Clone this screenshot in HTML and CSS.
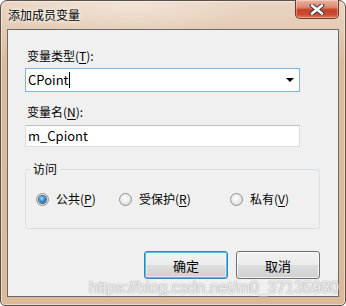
FILE: index.html
```html
<!DOCTYPE html>
<html>
<head>
<meta charset="utf-8">
<link rel="stylesheet" href="styles.css">
</head>
<body>
<div class="window">
  <div class="titlebar">
    <span class="title">添加成员变量</span>
    <div class="close">
      <svg width="16" height="11" viewBox="0 0 16 11">
        <path d="M3 1.5 L13 9.5 M13 1.5 L3 9.5" stroke="#3b3b3b" stroke-width="4.6" stroke-linecap="round"/>
        <path d="M3 1.5 L13 9.5 M13 1.5 L3 9.5" stroke="#ffffff" stroke-width="2.6" stroke-linecap="round"/>
      </svg>
    </div>
  </div>
  <div class="client">
    <div class="label">变量类型(<u>T</u>):</div>
    <div class="combo"><span class="value">CPoint</span><span class="caret"></span><span class="arrow"></span></div>
    <div class="label label2">变量名(<u>N</u>):</div>
    <div class="edit">m_Cpiont</div>
    <fieldset class="group">
      <legend>访问</legend>
      <div class="radios">
        <div class="radio"><span class="dot on"></span><span>公共(<u>P</u>)</span></div>
        <div class="radio"><span class="dot"></span><span>受保护(<u>R</u>)</span></div>
        <div class="radio"><span class="dot"></span><span>私有(<u>V</u>)</span></div>
      </div>
    </fieldset>
    <div class="buttons">
      <div class="btn default">确定</div>
      <div class="btn">取消</div>
    </div>
  </div>
  <div class="watermark">https://blog.csdn.net/m0_37135980</div>
</div>
</body>
</html>
```
FILE: styles.css
```css
html, body {
  margin: 0;
  padding: 0;
  background: #ffffff;
}
body {
  width: 346px;
  height: 306px;
  overflow: hidden;
  font-family: "Noto Sans CJK SC", "Liberation Sans", sans-serif;
  font-size: 12px;
  color: #000;
}
.window {
  position: relative;
  box-sizing: border-box;
  width: 346px;
  height: 306px;
  border: 1px solid #5b5148;
  border-radius: 7px 7px 5px 5px;
  background:
    radial-gradient(ellipse 120px 30px at 130px 6px, rgba(255,255,255,0.35), rgba(255,255,255,0) 100%),
    linear-gradient(180deg, #ead6c4 0px, #e4cbb4 28px, #dcbb9b 60px, #dcba98 100%);
  display: flex;
  flex-direction: column;
  box-shadow: inset 0 0 0 1px rgba(255,255,255,0.45);
}
.titlebar {
  height: 28px;
  display: flex;
  align-items: flex-start;
  padding-left: 7px;
}
.title {
  margin-top: 6px;
  font-size: 12px;
  line-height: 16px;
  text-shadow: 0 0 6px #fff, 0 0 3px #fff;
}
.close {
  margin-left: auto;
  margin-right: 6px;
  margin-top: -1px;
  width: 44px;
  height: 19px;
  box-sizing: border-box;
  border: 1px solid #6e3a2c;
  border-top: none;
  border-radius: 0 0 5px 5px;
  background: linear-gradient(180deg, #ebb1a1 0%, #dc8a72 40%, #c4412a 55%, #cd4a30 80%, #df7a55 100%);
  box-shadow: inset 0 0 0 1px rgba(255,255,255,0.35);
  display: flex;
  align-items: center;
  justify-content: center;
}
.close svg { display: block; }
.client {
  margin: 0 6px 0 6px;
  height: 268px;
  box-sizing: border-box;
  border: 1px solid #6a6a6a;
  background: #f0f0f0;
  padding: 18px 18px 0 17px;
  display: flex;
  flex-direction: column;
}
.label {
  padding-left: 2px;
  line-height: 16px;
  height: 16px;
}
.label u, .radio u { text-decoration: underline; text-underline-offset: 2px; }
.combo {
  margin-top: 4px;
  width: 275px;
  height: 24px;
  box-sizing: border-box;
  border: 1px solid #7fb3e2;
  background: #fff;
  display: flex;
  align-items: center;
  padding-left: 2px;
  font-size: 13px;
}
.value { line-height: 16px; }
.caret {
  width: 1px;
  height: 16px;
  background: #000;
  margin-left: 1px;
}
.arrow {
  margin-left: auto;
  margin-right: 5px;
  width: 0;
  height: 0;
  border-left: 4px solid transparent;
  border-right: 4px solid transparent;
  border-top: 4px solid #000;
}
.label2 { margin-top: 12px; }
.edit {
  margin-top: 5px;
  width: 275px;
  height: 22px;
  box-sizing: border-box;
  border: 1px solid #d9dde2;
  border-top-color: #b8bec5;
  background: #fff;
  padding-left: 2px;
  font-size: 13px;
  line-height: 20px;
}
.group {
  margin: 14px 0 0 0;
  width: 295px;
  box-sizing: border-box;
  border: 1px solid #d5dfe5;
  border-radius: 3px;
  padding: 0 0 21px 4px;
}
.group legend {
  padding: 0 3px;
  line-height: 16px;
}
.radios {
  margin-top: 14px;
  margin-left: 6px;
  display: grid;
  grid-template-columns: 83px 111px auto;
  line-height: 16px;
}
.radio {
  display: flex;
  align-items: center;
  gap: 7px;
}
.dot {
  width: 13px;
  height: 13px;
  box-sizing: border-box;
  border-radius: 50%;
  border: 1px solid #8f9090;
  background: radial-gradient(circle at 45% 40%, #ffffff 0%, #ececec 45%, #cfcfcf 100%);
  display: flex;
  align-items: center;
  justify-content: center;
}
.dot.on::after {
  content: "";
  width: 7px;
  height: 7px;
  border-radius: 50%;
  background: radial-gradient(circle at 40% 35%, #a6e2ff 0%, #3b95d4 40%, #124f8d 100%);
  box-shadow: 0 0 0 1px #3f5f7a;
}
.buttons {
  margin-top: auto;
  margin-bottom: 17px;
  display: flex;
  justify-content: flex-end;
  gap: 8px;
}
.btn {
  width: 84px;
  height: 28px;
  box-sizing: border-box;
  border: 1px solid #707070;
  border-radius: 3px;
  background: linear-gradient(180deg, #f2f2f2 0%, #ebebeb 48%, #dddddd 52%, #cfcfcf 100%);
  box-shadow: inset 0 0 0 1px rgba(255,255,255,0.7);
  display: flex;
  align-items: center;
  justify-content: center;
  font-size: 13px;
}
.btn.default {
  border-color: #3c7fb1;
  box-shadow: inset 0 0 0 1px #48c3f0, inset 0 0 0 2px rgba(255,255,255,0.4);
}
.watermark {
  position: absolute;
  left: 88px;
  top: 277px;
  font-family: "Liberation Sans", sans-serif;
  font-size: 16px;
  line-height: 20px;
  color: rgba(250,250,250,0.9);
  text-shadow: 0 0 1px rgba(130,130,130,0.8), 0 0 2px rgba(150,150,150,0.5);
  white-space: nowrap;
}
```
